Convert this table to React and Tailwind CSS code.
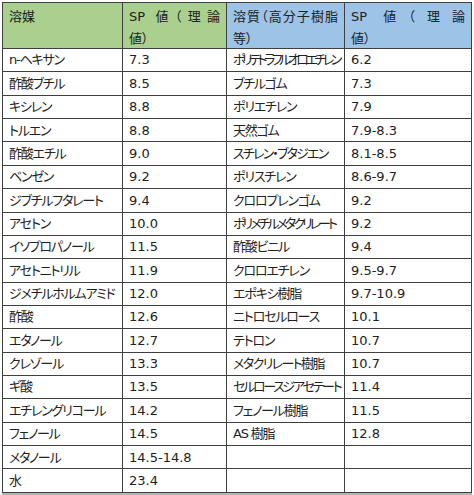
import React from "react"

// [溶媒, SP値, 溶質, SP値, 溶質の字間]
const solvents = [
	["n-ヘキサン", "7.3", "ポリテトラフルオロエチレン", "6.2", "tracking-[-3.5px]"],
	["酢酸ブチル", "8.5", "ブチルゴム", "7.3"],
	["キシレン", "8.8", "ポリエチレン", "7.9"],
	["トルエン", "8.8", "天然ゴム", "7.9-8.3"],
	["酢酸エチル", "9.0", "スチレン・ブタジエン", "8.1-8.5", "tracking-[-1.8px]"],
	["ベンゼン", "9.2", "ポリスチレン", "8.6-9.7"],
	["ジブチルフタレート", "9.4", "クロロプレンゴム", "9.2"],
	["アセトン", "10.0", "ポリメチルメタクリレート", "9.2", "tracking-[-3px]"],
	["イソプロパノール", "11.5", "酢酸ビニル", "9.4"],
	["アセトニトリル", "11.9", "クロロエチレン", "9.5-9.7"],
	["ジメチルホルムアミド", "12.0", "エポキシ樹脂", "9.7-10.9"],
	["酢酸", "12.6", "ニトロセルロース", "10.1"],
	["エタノール", "12.7", "テトロン", "10.7"],
	["クレゾール", "13.3", "メタクリレート樹脂", "10.7", "tracking-[-1.6px]"],
	["ギ酸", "13.5", "セルロースジアセテート", "11.4", "tracking-[-2.3px]"],
	["エチレングリコール", "14.2", "フェノール樹脂", "11.5"],
	["フェノール", "14.5", "AS 樹脂", "12.8"],
	["メタノール", "14.5-14.8", "", ""],
	["水", "23.4", "", ""],
]

const HeadCell = ({ first, second, color }) => (
	<div className={`${color} px-[6px] pt-[3px] leading-[22px]`}>
		<div className={second ? "[text-align-last:justify]" : ""}>{first}</div>
		{second && <div>{second}</div>}
	</div>
)

const Cell = ({ children, className = "" }) => (
	<div className={`bg-white px-[6px] flex items-center whitespace-nowrap overflow-hidden ${className}`}>
		{children}
	</div>
)

export default function App() {
	return (
		<div className="w-[474px] h-[495px] bg-white pt-[2px] pl-[2px]">
			<div
				className="w-[470px] text-[13px] text-[#222] [font-feature-settings:'palt']"
				style={{ fontFamily: '"DejaVu Sans", "Noto Sans CJK JP", sans-serif' }}
			>
				<div className="grid grid-cols-[119px_103px_117px_126px] grid-rows-[45px_repeat(19,22.37px)] gap-px bg-[#3f3f3f] p-px">
					<HeadCell first="溶媒" color="bg-[#a9d08e]" />
					<HeadCell first="SP 値（理論" second="値）" color="bg-[#a9d08e]" />
					<HeadCell first="溶質（高分子樹脂" second="等）" color="bg-[#9dc3e6]" />
					<HeadCell first="SP 値（理論" second="値）" color="bg-[#9dc3e6]" />
					{solvents.map((row, i) => (
						<React.Fragment key={i}>
							<Cell className="tracking-[-1.2px]">{row[0]}</Cell>
							<Cell>{row[1]}</Cell>
							<Cell className={row[4] || "tracking-[-1.2px]"}>{row[2]}</Cell>
							<Cell>{row[3]}</Cell>
						</React.Fragment>
					))}
				</div>
				<div className="h-[2px] bg-[#b4b4b4]" />
			</div>
		</div>
	)
}
